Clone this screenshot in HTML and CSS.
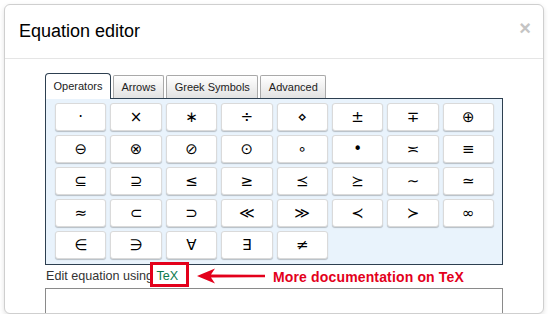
FILE: index.html
```html
<!DOCTYPE html>
<html>
<head>
<meta charset="utf-8">
<link rel="stylesheet" href="styles.css">
</head>
<body>
<div class="modal">
  <div class="modal-header">
    <h3 class="title">Equation editor</h3>
    <span class="close">×</span>
  </div>
  <div class="modal-body">
    <div class="tabs">
      <div class="tab active">Operators</div>
      <div class="tab">Arrows</div>
      <div class="tab">Greek Symbols</div>
      <div class="tab">Advanced</div>
    </div>
    <div class="panel">
      <div class="grid">
        <button class="sym">·</button>
        <button class="sym">×</button>
        <button class="sym">∗</button>
        <button class="sym">÷</button>
        <button class="sym">⋄</button>
        <button class="sym">±</button>
        <button class="sym">∓</button>
        <button class="sym">⊕</button>
        <button class="sym">⊖</button>
        <button class="sym">⊗</button>
        <button class="sym">⊘</button>
        <button class="sym">⊙</button>
        <button class="sym">∘</button>
        <button class="sym">•</button>
        <button class="sym">≍</button>
        <button class="sym">≡</button>
        <button class="sym">⊆</button>
        <button class="sym">⊇</button>
        <button class="sym">≤</button>
        <button class="sym">≥</button>
        <button class="sym">⪯</button>
        <button class="sym">⪰</button>
        <button class="sym">∼</button>
        <button class="sym">≃</button>
        <button class="sym">≈</button>
        <button class="sym">⊂</button>
        <button class="sym">⊃</button>
        <button class="sym">≪</button>
        <button class="sym">≫</button>
        <button class="sym">≺</button>
        <button class="sym">≻</button>
        <button class="sym">∞</button>
        <button class="sym">∈</button>
        <button class="sym">∋</button>
        <button class="sym">∀</button>
        <button class="sym">∃</button>
        <button class="sym">≠</button>
      </div>
    </div>
    <div class="label">
      Edit equation using <a class="tex">TeX</a>
      <span class="callout-box"></span>
      <svg class="callout-arrow" width="70" height="16" viewBox="0 0 70 16">
        <path d="M0 8 L18 0.5 L14 6.5 L68 6.7 L68 9.3 L14 9.5 L18 15.5 Z" fill="#e3001b"/>
      </svg>
      <span class="callout-text">More documentation on TeX</span>
    </div>
    <textarea class="editor"></textarea>
  </div>
</div>
</body>
</html>
```
FILE: styles.css
```css
html, body {
  margin: 0;
  padding: 0;
  background: #fff;
}
body {
  font-family: "Liberation Sans", Arial, sans-serif;
  color: #333;
}
.modal {
  margin: 4px 0 0 4px;
  width: 538px;
  height: 308px;
  border: 1px solid #cfcfcf;
  border-radius: 6px;
  box-shadow: 0 2px 5px rgba(0,0,0,0.12);
  overflow: hidden;
  background: #fff;
}
.modal-header {
  height: 53px;
  border-bottom: 1px solid #e5e5e5;
  display: flex;
  align-items: center;
  justify-content: space-between;
  padding: 0 12px 0 14px;
}
.title {
  margin: 0;
  font-size: 18px;
  font-weight: normal;
  color: #000;
  line-height: 20px;
  padding-bottom: 1px;
}
.close {
  font-size: 20px;
  font-weight: bold;
  color: #c4c4c4;
  line-height: 20px;
  margin-top: -8px;
}
.modal-body {
  padding: 14px 40px 0 40px;
}
.tabs {
  display: flex;
  align-items: flex-end;
  height: 25px;
  gap: 2px;
}
.tab {
  box-sizing: border-box;
  height: 23px;
  padding: 0 7.5px;
  border: 1px solid #a9a9a9;
  border-bottom: none;
  background: linear-gradient(#ffffff, #e2e2e2);
  font-size: 11px;
  color: #222;
  line-height: 22px;
  border-radius: 2px 2px 0 0;
}
.tab.active {
  height: 26px;
  margin-bottom: -1px;
  border-color: #2d3f50;
  background: #fff;
  border-radius: 4px 4px 0 0;
  line-height: 25px;
  position: relative;
  z-index: 1;
}
.panel {
  border: 1px solid #2d3f50;
  background: #e9f3fc;
  padding: 4px 8px 5px 9px;
}
.grid {
  display: grid;
  grid-template-columns: repeat(8, 1fr);
  grid-auto-rows: 28px;
  gap: 4px 4px;
}
.sym {
  margin: 0;
  padding: 0;
  border: 1px solid #dadada;
  border-radius: 3px;
  background: #fff;
  box-shadow: 0 1px 1px rgba(0,0,0,0.22);
  font-family: "DejaVu Sans", sans-serif;
  font-size: 15px;
  color: #000;
  line-height: 26px;
}
.label {
  position: relative;
  height: 18px;
  line-height: 18px;
  padding: 2px 0 2px 1px;
  margin-bottom: 1px;
  font-size: 12.6px;
  color: #333;
}
.tex {
  color: #0e7a4d;
  text-decoration: none;
}
.callout-box {
  position: absolute;
  left: 105px;
  top: -3px;
  width: 39px;
  height: 25px;
  box-sizing: border-box;
  border: 3px solid #e3001b;
}
.callout-arrow {
  position: absolute;
  left: 152px;
  top: 3px;
}
.callout-text {
  position: absolute;
  left: 228px;
  top: 3px;
  font-weight: bold;
  font-size: 14px;
  letter-spacing: 0.15px;
  color: #e3001b;
  white-space: nowrap;
}
.editor {
  display: block;
  box-sizing: border-box;
  width: 458px;
  height: 60px;
  margin: 0;
  border: 1px solid #8a8a8a;
  resize: none;
  background: #fff;
}
```
